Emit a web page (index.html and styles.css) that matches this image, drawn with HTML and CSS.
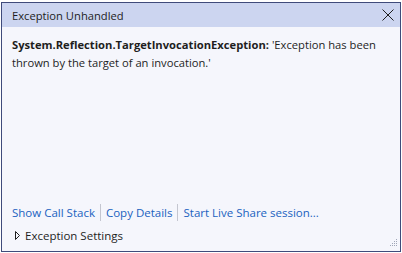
FILE: index.html
```html
<!DOCTYPE html>
<html lang="en">
<head>
    <meta charset="UTF-8">
    <title>Exception Unhandled</title>
    <link rel="stylesheet" href="styles.css">
</head>
<body>
    <div class="dialog">
        <div class="titlebar">
            <span class="title">Exception Unhandled</span>
            <svg class="close" width="12" height="12" viewBox="0 0 12 12">
                <path d="M0.5 0.5 L11.5 11.5 M11.5 0.5 L0.5 11.5" stroke="#1e1e1e" stroke-width="1" fill="none"/>
            </svg>
        </div>
        <div class="content">
            <p class="message"><b>System.Reflection.TargetInvocationException:</b> 'Exception has been thrown by the target of an invocation.'</p>
            <div class="links">
                <a href="#">Show Call Stack</a>
                <span class="sep"></span>
                <a href="#">Copy Details</a>
                <span class="sep"></span>
                <a href="#">Start Live Share session...</a>
            </div>
            <div class="settings">
                <svg class="arrow" width="5" height="9" viewBox="0 0 5 9">
                    <path d="M0.5 0.5 L4.5 4.5 L0.5 8.5 Z" stroke="#1e1e1e" stroke-width="1" fill="none"/>
                </svg>
                <span>Exception Settings</span>
            </div>
            <svg class="grip" width="10" height="10" viewBox="0 0 10 10">
                <g fill="#a0a6b8">
                    <rect x="8" y="0" width="1" height="1"/>
                    <rect x="6" y="2" width="1" height="1"/><rect x="8" y="2" width="1" height="1"/>
                    <rect x="4" y="4" width="1" height="1"/><rect x="6" y="4" width="1" height="1"/><rect x="8" y="4" width="1" height="1"/>
                    <rect x="2" y="6" width="1" height="1"/><rect x="4" y="6" width="1" height="1"/><rect x="6" y="6" width="1" height="1"/><rect x="8" y="6" width="1" height="1"/>
                </g>
            </svg>
        </div>
    </div>
</body>
</html>
```
FILE: styles.css
```css
body { margin: 0; background: #ffffff; font-family: "Open Sans", "Noto Sans", sans-serif; font-size: 11.5px; color: #1e1e1e; }
.dialog { margin: 2px 0 0 1px; width: 398px; height: 248px; border: 1px solid #3f4b7b; background: #f5f6fc; display: flex; flex-direction: column; }
.titlebar { height: 24px; background: #ccd5f0; display: flex; align-items: center; justify-content: space-between; padding: 0 6px 0 10px; }
.title { font-size: 11.2px; }
.close { display: block; }
.content { flex: 1; position: relative; display: flex; flex-direction: column; padding: 0 10px; }
.message { margin: 9px 0 0; font-size: 11.2px; line-height: 18px; flex: 1; }
.links { display: flex; align-items: center; gap: 5px; height: 18px; margin-bottom: 3px; }
.links a { color: #1a62c0; text-decoration: none; }
.sep { width: 1px; height: 17px; background: #c4c6d0; }
.settings { display: flex; align-items: center; gap: 5px; height: 22px; margin-bottom: 5px; padding-left: 3px; }
.grip { position: absolute; right: 2px; bottom: 2px; }
```
